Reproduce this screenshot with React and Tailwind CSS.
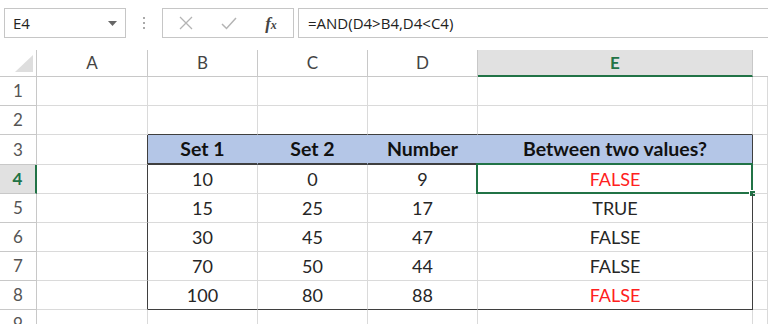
import React from "react";

const GRID = "border-[#dadada]";

const rows = [
  { n: 1, h: "h-[29px]" },
  { n: 2, h: "h-[29px]" },
  { n: 3, h: "h-[30px]" },
  { n: 4, h: "h-[29px]" },
  { n: 5, h: "h-[29px]" },
  { n: 6, h: "h-[29px]" },
  { n: 7, h: "h-[29px]" },
  { n: 8, h: "h-[29px]" },
  { n: 9, h: "h-[29px]" },
];

const data = {
  3: ["Set 1", "Set 2", "Number", "Between two values?"],
  4: ["10", "0", "9", "FALSE"],
  5: ["15", "25", "17", "TRUE"],
  6: ["30", "45", "47", "FALSE"],
  7: ["70", "50", "44", "FALSE"],
  8: ["100", "80", "88", "FALSE"],
};
const red = { 4: true, 8: true };

function Cell({ r, c }) {
  const inTable = r >= 3 && r <= 8 && c >= 1 && c <= 4;
  const isHeader = r === 3 && inTable;
  let cls = "relative flex items-center justify-center border-b border-r " + GRID;
  if (r >= 3 && r <= 8 && (c === 0 || c === 4)) cls += " !border-r-[#3f3f3f]";
  if (isHeader && c < 4) cls += " !border-r-[#b4c6e7]";
  if ((r === 2 || r === 8) && c >= 1 && c <= 4) cls += " !border-b-[#3f3f3f]";
  if (isHeader) cls += " !border-b-2 !border-b-[#3f3f3f] bg-[#b4c6e7]";
  const text = inTable ? data[r][c - 1] : "";
  let tcls = "text-[18px] leading-none text-[#262626]";
  if (isHeader) tcls = "text-[19.5px] leading-none font-bold text-[#111]";
  if (c === 4 && red[r]) tcls = "text-[18px] leading-none text-[#ff2020]";
  return (
    <div className={cls}>
      <span className={tcls}>{text}</span>
      {r === 4 && c === 4 && (
        <div className="absolute -left-[2px] -top-[2px] -right-[1px] -bottom-[1px] border-2 border-[#217346] pointer-events-none">
          <div className="absolute -right-[5px] -bottom-[5px] w-[7px] h-[7px] bg-[#217346] border border-white" />
        </div>
      )}
    </div>
  );
}

export default function App() {
  const font = { fontFamily: "Lato, 'Open Sans', sans-serif" };
  return (
    <div className="w-[768px] h-[324px] overflow-hidden bg-white" style={font}>
      {/* Formula bar */}
      <div className="h-[50px] flex items-start pt-[8px] pl-[4px]">
        <div className="w-[122px] h-[30px] border border-[#c6c6c6] flex items-center justify-between pl-[8px] pr-[8px]">
          <span className="text-[15px] text-[#222]" style={{ fontFamily: "'Open Sans', sans-serif" }}>E4</span>
          <svg width="9" height="5" viewBox="0 0 9 5"><path d="M0 0 L9 0 L4.5 5 Z" fill="#666" /></svg>
        </div>
        <div className="w-[36px] h-[30px] flex flex-col items-center justify-center gap-[3px]">
          <div className="w-[2px] h-[2px] bg-[#aaa]" />
          <div className="w-[2px] h-[2px] bg-[#aaa]" />
          <div className="w-[2px] h-[2px] bg-[#aaa]" />
        </div>
        <div className="w-[132px] h-[30px] border border-[#c6c6c6] flex items-center">
          <div className="w-[42px] flex justify-center pl-[4px]">
            <svg width="14" height="14" viewBox="0 0 14 14"><path d="M1 1 L13 13 M13 1 L1 13" stroke="#b4b4b4" strokeWidth="1.3" /></svg>
          </div>
          <div className="w-[48px] flex justify-center">
            <svg width="16" height="14" viewBox="0 0 16 14"><path d="M1 8 L5.5 12.5 L15 2" stroke="#b4b4b4" strokeWidth="1.5" fill="none" /></svg>
          </div>
          <div className="w-[36px] flex justify-center">
            <span className="italic font-bold text-[#444] text-[17px] leading-none" style={{ fontFamily: "'Liberation Serif', serif" }}>f<span className="text-[12px]">x</span></span>
          </div>
        </div>
        <div className="ml-[4px] flex-1 h-[30px] border border-r-0 border-[#c6c6c6] flex items-center pl-[9px]">
          <span className="text-[15px] text-[#222]" style={{ fontFamily: "'Open Sans', sans-serif" }}>=AND(D4&gt;B4,D4&lt;C4)</span>
        </div>
      </div>

      {/* Sheet */}
      <div className="grid grid-cols-[37px_111px_110px_110px_110px_275px_1fr]">
        <div className="h-[27px] border-r border-b border-[#c8c8c8] bg-white flex items-end justify-end pr-[3px] pb-[4px]">
          <svg width="18" height="17" viewBox="0 0 18 17"><path d="M18 0 L18 17 L0 17 Z" fill="#dedede" /></svg>
        </div>
        {["A", "B", "C", "D"].map((l) => (
          <div key={l} className="h-[27px] border-r border-b border-[#c8c8c8] flex items-center justify-center text-[17px] text-[#444]">{l}</div>
        ))}
        <div className="h-[27px] border-r border-[#c8c8c8] border-b-2 border-b-[#217346] bg-[#e1e1e1] flex items-center justify-center text-[17px] font-bold text-[#217346]">E</div>
        <div className="h-[27px] border-b border-[#c8c8c8]" />

        {rows.map(({ n, h }) => (
          <React.Fragment key={n}>
            <div className={`${h} border-b border-r ${n === 4 ? "bg-[#e1e1e1] border-r-2 border-r-[#217346] border-b-[#c8c8c8]" : "border-[#c8c8c8]"} flex items-center justify-center text-[17px] ${n === 4 ? "font-bold text-[#217346]" : "text-[#555]"}`}>
              {n}
            </div>
            {[0, 1, 2, 3, 4, 5].map((c) => (
              <Cell key={c} r={n} c={c} />
            ))}
          </React.Fragment>
        ))}
      </div>
    </div>
  );
}
